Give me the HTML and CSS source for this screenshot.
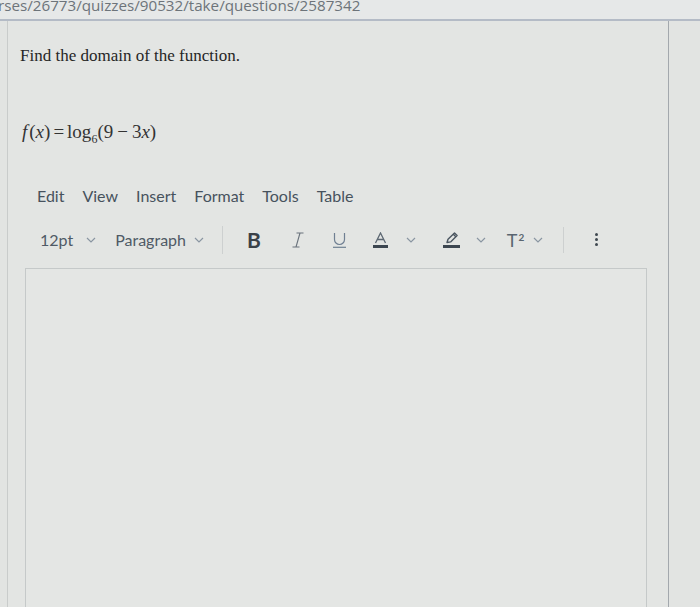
FILE: index.html
```html
<!DOCTYPE html>
<html>
<head>
<meta charset="utf-8">
<link rel="stylesheet" href="styles.css">
</head>
<body>
<div class="urlbar"><span class="url">rses/26773/quizzes/90532/take/questions/2587342</span></div>
<div class="page">
  <div class="panel">
    <p class="question">Find the domain of the function.</p>
    <p class="formula"><i>f</i><span class="p">(</span><i>x</i>)<span class="eq">=</span>log<sub>6</sub>(9<span class="minus">−</span>3<i>x</i>)</p>
    <div class="menubar">
      <span>Edit</span><span>View</span><span>Insert</span><span>Format</span><span>Tools</span><span>Table</span>
    </div>
    <div class="toolbar">
      <span class="drop size">12pt<svg class="chev" viewBox="0 0 10 6"><path d="M1 1l4 4 4-4"/></svg></span>
      <span class="drop para">Paragraph<svg class="chev" viewBox="0 0 10 6"><path d="M1 1l4 4 4-4"/></svg></span>
      <span class="sep"></span>
      <span class="btn bold">B</span>
      <span class="btn ital"><svg viewBox="0 0 14 16" width="14" height="16"><path d="M5.5 1h7M1.5 15h7M9 1L5 15" fill="none" stroke="#6a737c" stroke-width="1.1"/></svg></span>
      <span class="btn under"><svg viewBox="0 0 15 16" width="15" height="16"><path d="M2.5 1v6.5a5 5 0 0 0 10 0V1" fill="none" stroke="#6f7f92" stroke-width="1.2"/><path d="M1 15.3h13" stroke="#6f7f92" stroke-width="1.2"/></svg></span>
      <span class="btn color"><svg viewBox="0 0 17 16" width="17" height="16"><path d="M3.5 11L8.5 1l5 10M5.5 7.5h6" fill="none" stroke="#5d6873" stroke-width="1.3"/><rect x="1" y="13" width="15" height="3" fill="#3c4650"/></svg><svg class="chev" viewBox="0 0 10 6"><path d="M1 1l4 4 4-4"/></svg></span>
      <span class="btn pen"><svg viewBox="0 0 19 16" width="19" height="16"><path d="M5 10.5l1-3.2 6.5-6.3 2.6 2.6-6.5 6.3z M11.3 2.3l2.5 2.5" fill="none" stroke="#4a5560" stroke-width="1.4" stroke-linejoin="round"/><rect x="1" y="13" width="17" height="3" fill="#3c4650"/></svg><svg class="chev" viewBox="0 0 10 6"><path d="M1 1l4 4 4-4"/></svg></span>
      <span class="btn sup"><span class="t">T<sup>2</sup></span><svg class="chev" viewBox="0 0 10 6"><path d="M1 1l4 4 4-4"/></svg></span>
      <span class="sep sep2"></span>
      <span class="more"><i></i><i></i><i></i></span>
    </div>
    <div class="editor"></div>
  </div>
</div>
</body>
</html>
```
FILE: styles.css
```css
html, body {
  margin: 0;
  padding: 0;
  height: 100%;
  overflow: hidden;
}
body {
  background: #e2e4e2;
  font-family: "Lato", "Open Sans", sans-serif;
}
.urlbar {
  height: 19px;
  overflow: hidden;
  background: #e6e8e8;
  border-bottom: 2px solid #b4bbc6;
}
.url {
  display: block;
  margin-top: -5px;
  margin-left: -2px;
  font-family: "Open Sans", sans-serif;
  font-size: 15.2px;
  line-height: 20px;
  color: #6d747a;
}
.page {
  height: calc(100% - 21px);
}
.panel {
  margin-left: 7px;
  width: 660px;
  height: 100%;
  border-left: 1px solid #c9cccb;
  border-right: 1px solid #a3a8ad;
  background: #e3e5e3;
  display: flex;
  flex-direction: column;
}
.question {
  margin: 25px 0 0 12px;
  font-family: "Liberation Serif", serif;
  font-size: 17px;
  color: #262626;
  line-height: 20px;
}
.formula {
  margin: 55px 0 0 14px;
  font-family: "Liberation Serif", serif;
  font-size: 19px;
  color: #333;
  line-height: 22px;
}
.formula .p { margin-left: 2px; }
.formula .eq { margin: 0 3px; }
.formula .minus { margin: 0 4px; }
.formula sub { font-size: 12px; }
.menubar {
  margin: 37px 0 0 29px;
  display: flex;
  font-size: 16px;
  color: #47525d;
  line-height: 18px;
}
.menubar span { margin-right: 18px; }
.toolbar {
  margin: 22px 0 0 32px;
  height: 26px;
  display: flex;
  align-items: center;
  color: #4f5a66;
  font-size: 16px;
}
.chev {
  width: 10px;
  height: 6px;
  fill: none;
  stroke: #8a96a2;
  stroke-width: 1.2;
}
.drop { display: flex; align-items: center; }
.size .chev { margin-left: 13px; }
.size { margin-right: 19px; }
.para .chev { margin-left: 8px; }
.para { margin-right: 18px; }
.sep {
  width: 1px;
  height: 28px;
  background: #cdd0d0;
  margin-right: 24px;
}
.btn { display: flex; align-items: center; }
.bold {
  font-weight: 700;
  font-size: 21px;
  color: #3a4148;
  margin-right: 30px;
}
.ital { margin-right: 27px; }
.under { margin-right: 25px; }
.color .chev { margin-left: 17px; }
.color { margin-right: 26px; }
.pen .chev { margin-left: 15px; }
.pen { margin-right: 21px; }
.sup .t { font-size: 18px; color: #5a6570; line-height: 20px; }
.sup sup { font-size: 10px; font-weight: 700; margin-left: 1px; vertical-align: 6px; line-height: 0; }
.sup .chev { margin-left: 9px; }
.sep2 { margin-left: 20px; margin-right: 31px; height: 26px; }
.more {
  display: flex;
  flex-direction: column;
  gap: 2px;
}
.more i {
  width: 3px;
  height: 3px;
  border-radius: 50%;
  background: #3f4850;
}
.editor {
  margin: 15px 0 0 17px;
  width: 620px;
  flex: 1;
  border: 1px solid #c5c9c9;
  border-bottom: none;
  background: #e4e6e4;
}
```
